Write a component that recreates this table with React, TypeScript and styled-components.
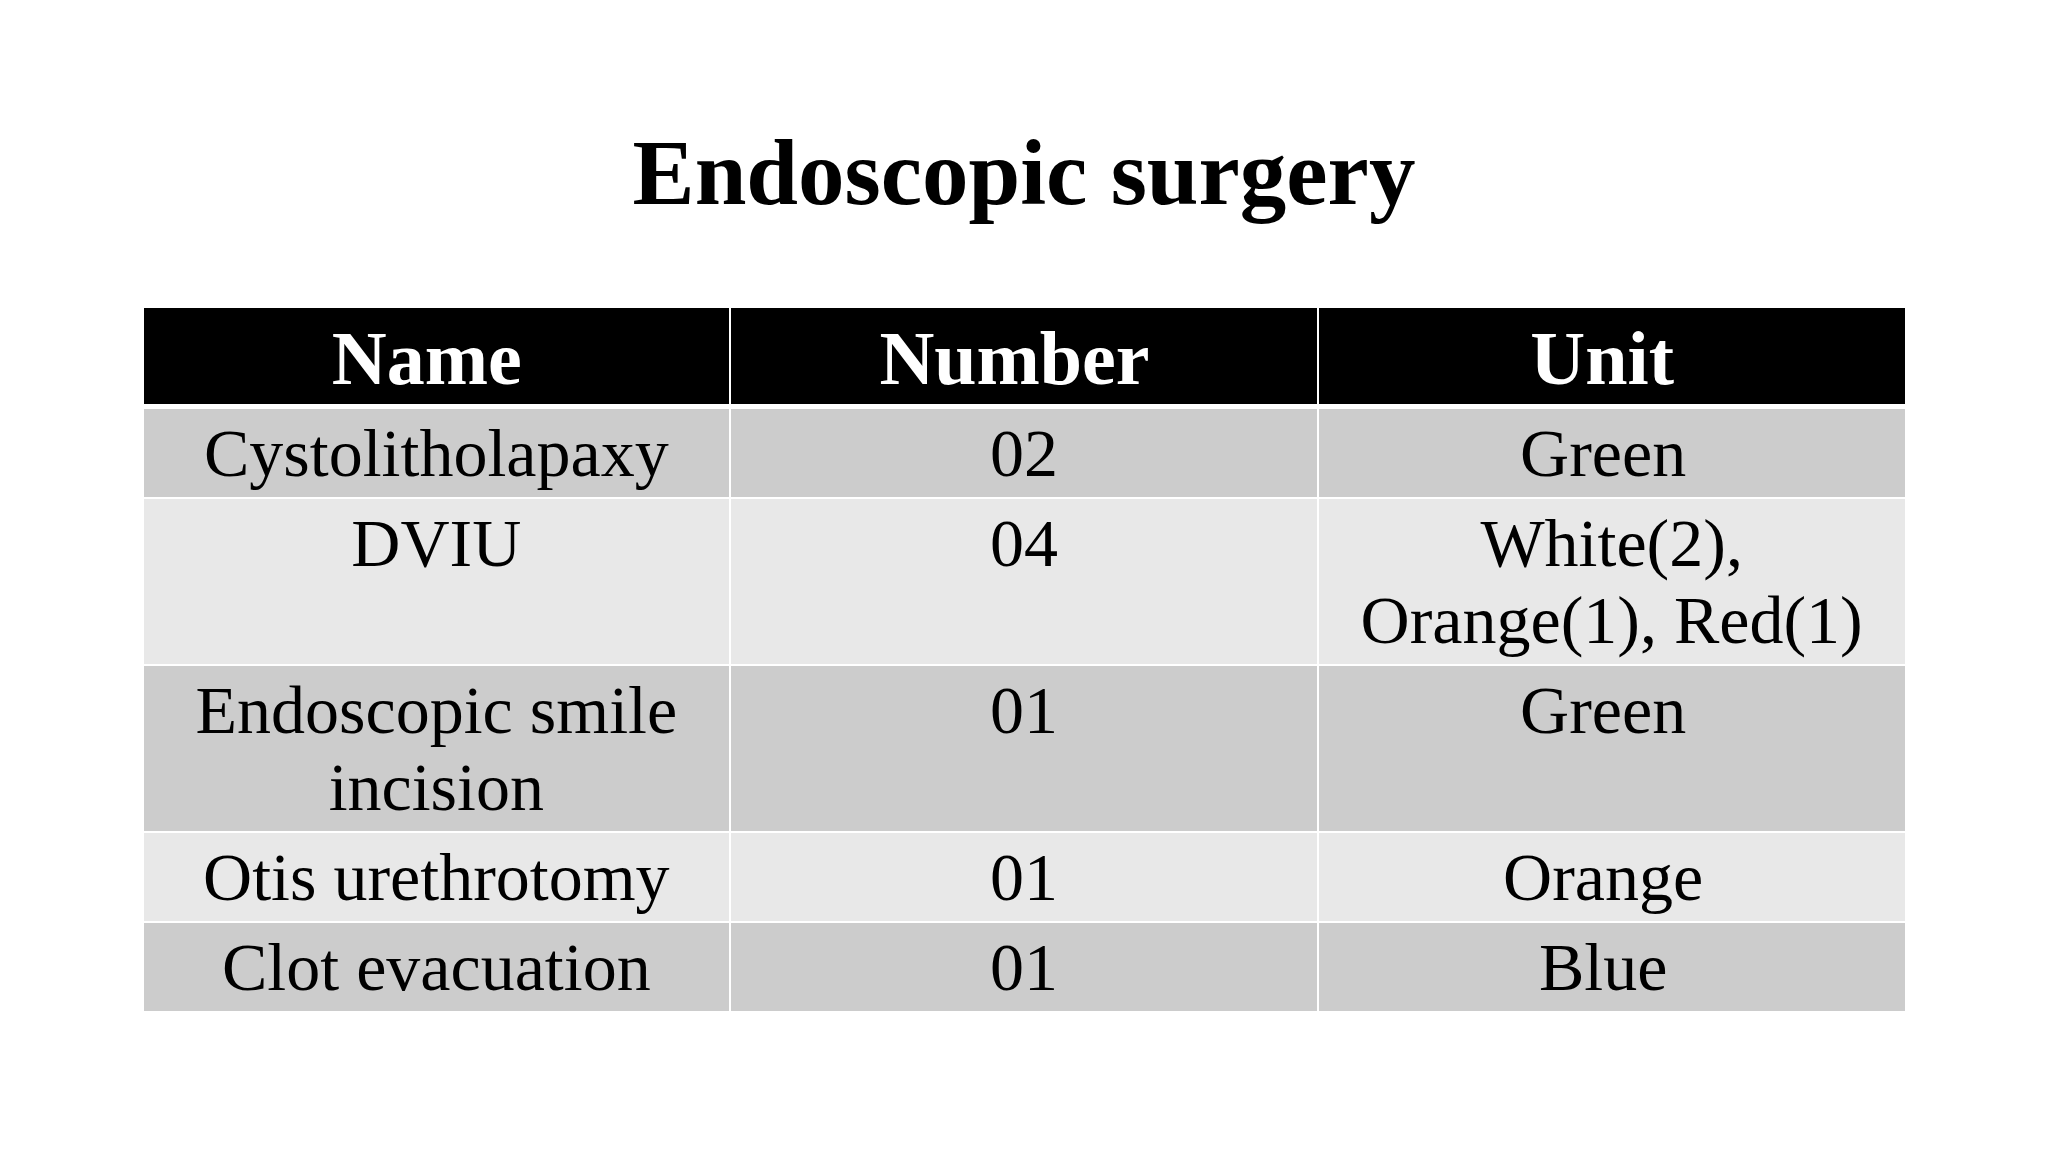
import React, {ReactElement} from "react";
import styled, {createGlobalStyle} from "styled-components";

interface Row {
    name: string
    number: string
    unit: string
    // single-word units carry a trailing space on the slide, nudging them left
    unitTrail?: boolean
}

const rows: Row[] = [
    {name: "Cystolitholapaxy", number: "02", unit: "Green", unitTrail: true},
    {name: "DVIU", number: "04", unit: "White(2), Orange(1), Red(1)"},
    {name: "Endoscopic smile incision", number: "01", unit: "Green", unitTrail: true},
    {name: "Otis urethrotomy", number: "01", unit: "Orange", unitTrail: true},
    {name: "Clot evacuation", number: "01", unit: "Blue", unitTrail: true},
];

const GlobalStyle = createGlobalStyle`
  html, body {
    margin: 0;
    padding: 0;
    background: #ffffff;
  }

  body {
    font-family: "Liberation Serif", "Times New Roman", serif;
    color: #000000;
  }
`;

const Slide = styled.div`
  width: 2048px;
  height: 1152px;
  display: flex;
  flex-direction: column;
  align-items: center;
  overflow: hidden;
`;

const Title = styled.h1`
  margin: 126px 0 0;
  font-size: 93px;
  line-height: 93px;
  font-weight: 700;
  text-align: center;
`;

const Table = styled.table`
  margin-top: 89px;
  width: 1765px;
  table-layout: fixed;
  border-collapse: collapse;
  text-align: center;
`;

const HeaderCell = styled.th`
  background: #000000;
  color: #ffffff;
  font-size: 76px;
  font-weight: 700;
  line-height: 87px;
  padding: 7px 33px 2px 14px;
  border-left: 2px solid #ffffff;
  border-right: 2px solid #ffffff;
  border-bottom: 5px solid #ffffff;
`;

const BodyRow = styled.tr<{ $odd: boolean }>`
  background: ${p => p.$odd ? "#cccccc" : "#e8e8e8"};
`;

const Cell = styled.td<{ $trail?: boolean }>`
  font-size: 68px;
  line-height: 77px;
  padding: 6px ${p => p.$trail ? "31px" : "14px"} 5px 14px;
  vertical-align: top;
  border: 2px solid #ffffff;
  border-top: none;
`;

export default function App(): ReactElement {
    return (
        <>
            <GlobalStyle/>
            <Slide>
                <Title>Endoscopic surgery</Title>
                <Table>
                    <thead>
                    <tr>
                        <HeaderCell>Name</HeaderCell>
                        <HeaderCell>Number</HeaderCell>
                        <HeaderCell>Unit</HeaderCell>
                    </tr>
                    </thead>
                    <tbody>
                    {rows.map((row, i) => (
                        <BodyRow key={row.name} $odd={i % 2 === 0}>
                            <Cell>{row.name}</Cell>
                            <Cell>{row.number}</Cell>
                            <Cell $trail={row.unitTrail}>{row.unit}</Cell>
                        </BodyRow>
                    ))}
                    </tbody>
                </Table>
            </Slide>
        </>
    );
}
